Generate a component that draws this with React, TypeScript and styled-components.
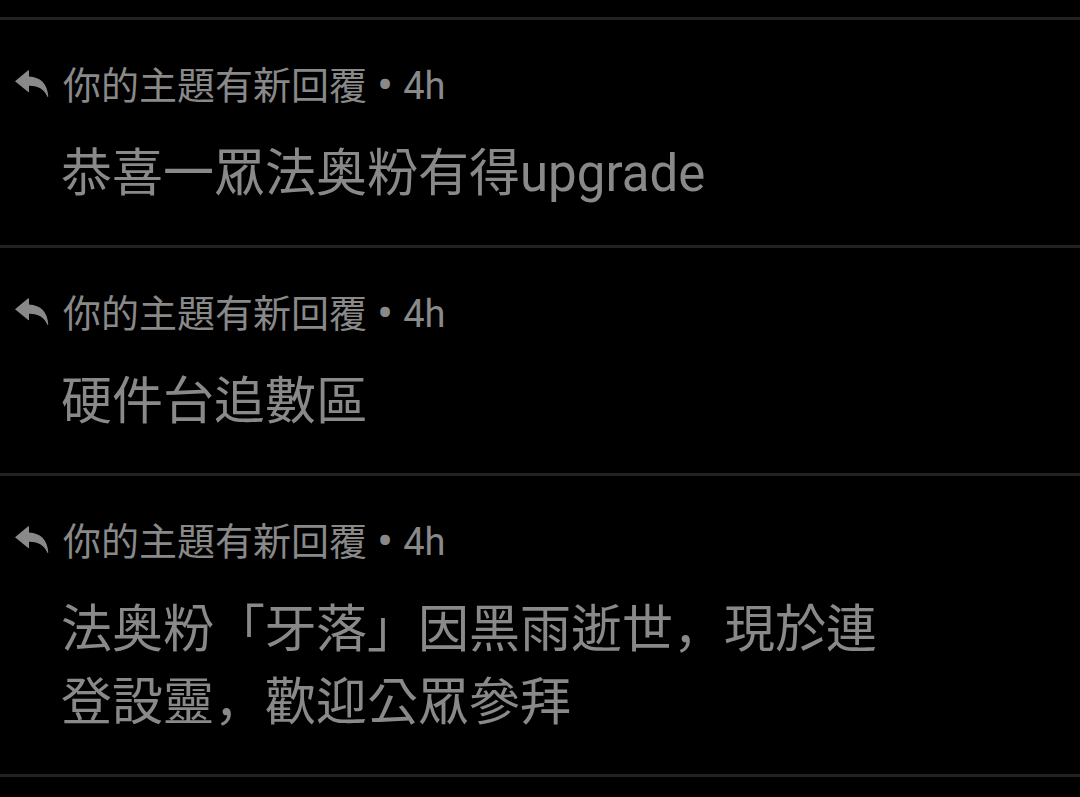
import React from "react";
import styled, { createGlobalStyle } from "styled-components";

const GlobalStyle = createGlobalStyle`
  *, *::before, *::after { box-sizing: border-box; }
  body {
    margin: 0;
    background: #000;
    color: #898989;
    font-family: Roboto, "Noto Sans CJK KR", sans-serif;
  }
`;

const Feed = styled.ul`
  list-style: none;
  margin: 0;
  padding: 17px 0 0;
`;

const Item = styled.li`
  border-top: 3px solid #222;
  padding: 40px 16px 35px 15px;
  &:last-child { border-bottom: 3px solid #222; }
`;

const Meta = styled.div`
  display: flex;
  align-items: flex-start;
  font-size: 38px;
  line-height: 52px;
`;

const ReplyIcon = styled.svg`
  flex: none;
  width: 34px;
  height: 28px;
  margin: 10px 14px 0 0;
  fill: currentColor;
`;

const Dot = styled.span`
  margin: 0 10px;
  font-size: 48px;
`;

const Title = styled.h2`
  margin: 25px 0 0 46px;
  max-width: 830px;
  font-size: 51px;
  font-weight: 400;
  line-height: 73px;
`;

const items = [
  "恭喜一眾法奥粉有得upgrade",
  "硬件台追數區",
  "法奥粉「牙落」因黑雨逝世，現於連登設靈，歡迎公眾參拜",
];

export default function App() {
  return (
    <>
      <GlobalStyle />
      <Feed>
        {items.map((title) => (
          <Item key={title}>
            <Meta>
              <ReplyIcon viewBox="0 0 34 28" aria-hidden="true">
                <path d="M0 11.3 13.2 0.2Q14 0 14 1V6.4C26 7 32.5 14 33.3 26.5L32.5 27C29.5 20 24.500 16 14 15.8V21.5Q14 22.6 13.2 22Z" />
              </ReplyIcon>
              <span>你的主題有新回覆</span>
              <Dot>•</Dot>
              <span>4h</span>
            </Meta>
            <Title>{title}</Title>
          </Item>
        ))}
      </Feed>
    </>
  );
}
